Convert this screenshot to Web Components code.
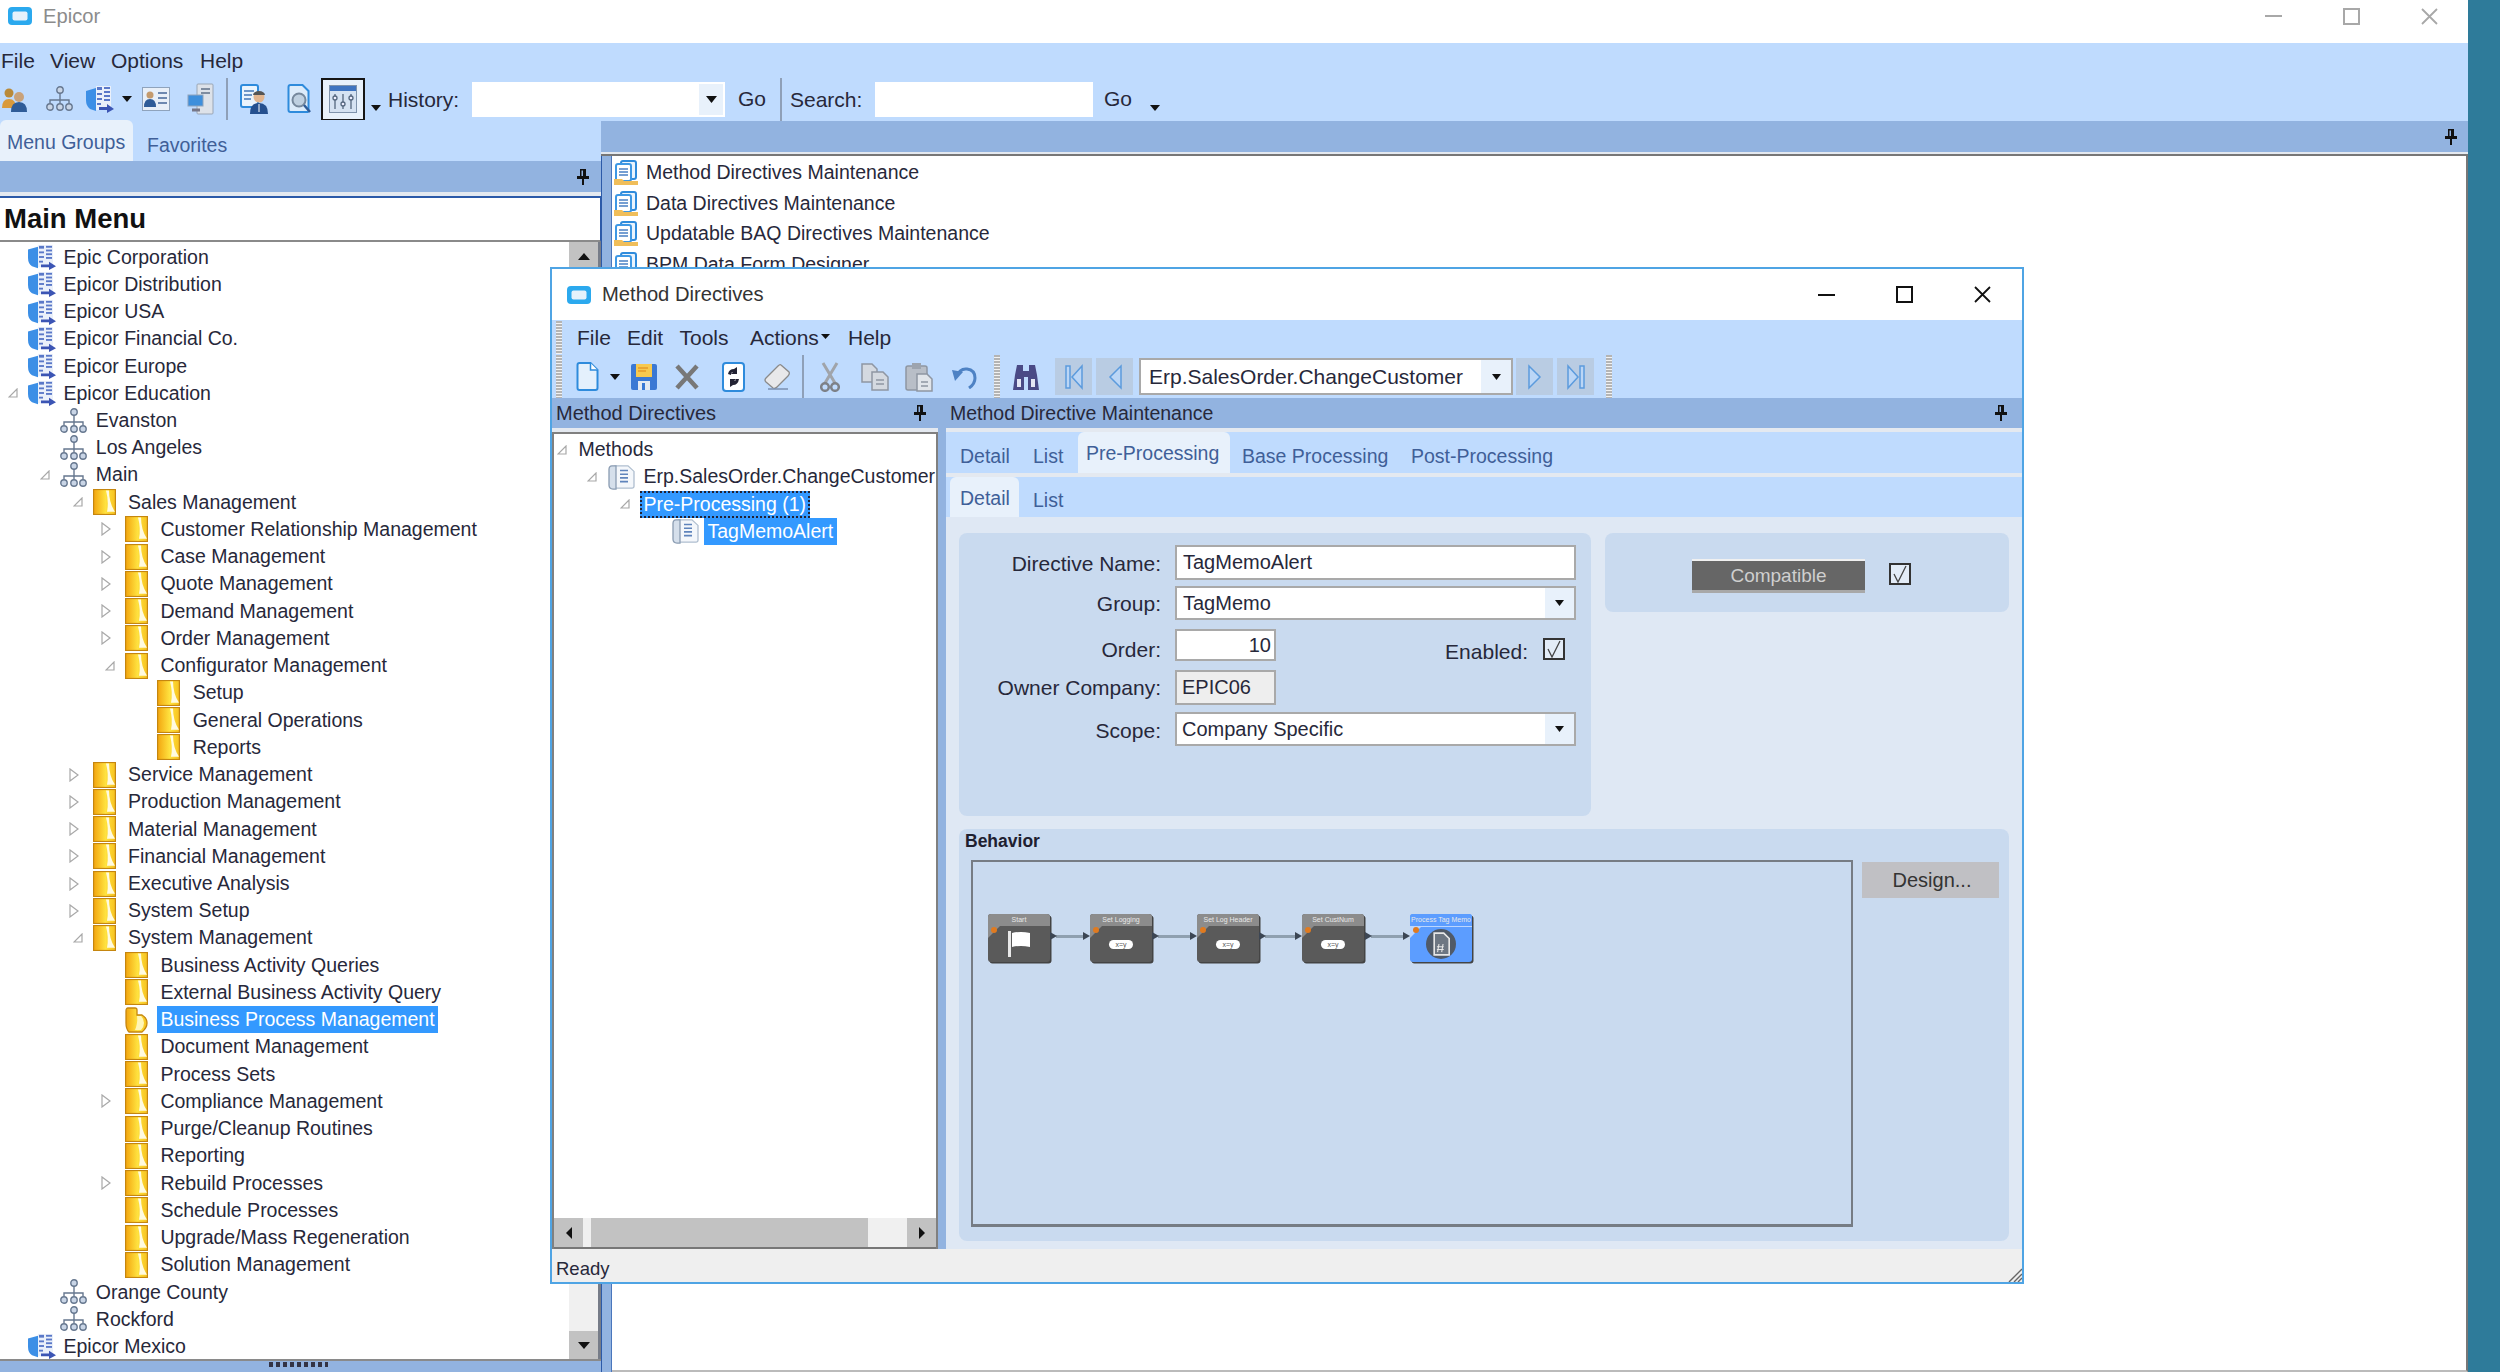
<!DOCTYPE html>
<html lang="en"><head><meta charset="utf-8"><title>Epicor</title>
<style>html,body{margin:0;padding:0;background:#2E7B9A}</style></head>
<body>
<ep-desktop>
  <ep-main-window></ep-main-window>
  <ep-dialog></ep-dialog>
</ep-desktop>
<script>
const FOLDER_GRAD='<defs><linearGradient id="g" x1="0" x2="1"><stop offset="0" stop-color="#F2A50F"/><stop offset=".55" stop-color="#FFE23F"/><stop offset="1" stop-color="#F7C21F"/></linearGradient></defs>';
const ICONS={
app:[24,18,'<rect width="24" height="18" rx="4" fill="#2BA9EE"/><rect x="4.5" y="4.5" width="15" height="9" rx="2" fill="#E6F2FB"/>'],
people:[26,26,'<circle cx="7" cy="7" r="4.5" fill="#B98A3A"/><path d="M0 22q0-9 7-9t7 9z" fill="#D99A3C"/><circle cx="17" cy="11" r="5" fill="#C9A27A"/><path d="M9 26q0-10 8-10t8 10z" fill="#2F5C98"/>'],
org:[27,26,'<g fill="#C9D5E6" stroke="#66778F" stroke-width="1.4"><circle cx="14" cy="4" r="3.2"/><circle cx="4" cy="21" r="3.2"/><circle cx="14" cy="21" r="3.2"/><circle cx="23" cy="21" r="3.2"/></g><path d="M14 7v10M4 17v-3h19v3" fill="none" stroke="#66778F" stroke-width="1.4"/>'],
building:[28,28,'<path d="M0 6l10-3v23l-6-2q-4-3-4-9z" fill="#3C8FE6"/><rect x="10" y="1" width="15" height="24" fill="#EAF0FA"/><g fill="#5A78C8"><rect x="11" y="2" width="5" height="3"/><rect x="18" y="2" width="6" height="2"/><rect x="18" y="6" width="6" height="2"/><rect x="18" y="10" width="6" height="2"/><rect x="18" y="14" width="6" height="2"/><rect x="11" y="8" width="5" height="2"/><rect x="11" y="13" width="5" height="2"/><rect x="11" y="18" width="4" height="2"/></g><path d="M13 22h8v-3l7 5-7 4v-3h-8z" fill="#3C55B4"/>'],
card:[28,24,'<rect x=".5" y=".5" width="27" height="23" fill="#E8EFF8" stroke="#8FA3BC"/><circle cx="8" cy="8" r="3.5" fill="#C49A6C"/><path d="M2 20q0-8 6-8t6 8z" fill="#2F5C98"/><path d="M16 6h9M16 11h9M16 16h9" stroke="#6D88B0" stroke-width="2"/>'],
computer:[27,32,'<rect x="10" y="1" width="16" height="30" rx="1" fill="#DDE2E9" stroke="#9AA6B5"/><path d="M14 6h9M14 10h9" stroke="#7F8DA0" stroke-width="2"/><rect x="1" y="12" width="15" height="11" fill="#3E8FDC" stroke="#8FA3BC"/><path d="M5 27h8" stroke="#778" stroke-width="3"/>'],
persondoc:[28,30,'<rect x="1" y="1" width="17" height="22" rx="2" fill="#EAF4FD" stroke="#2E8BDC" stroke-width="2"/><path d="M4 7h10M4 11h8M4 15h7" stroke="#6D96C8" stroke-width="2"/><circle cx="19" cy="13" r="5.5" fill="#E2B58F"/><path d="M19 7a6 4 0 0 1 6 4h-12a6 4 0 0 1 6-4z" fill="#555"/><path d="M10 30q0-11 9-11t9 11z" fill="#25508F"/><path d="M19 20v8" stroke="#fff"/>'],
docmag:[25,30,'<path d="M1.500 3q0-2 2-2h12l6 6v20q0 1-2 1h-16q-2 0-2-2z" fill="#DCEBFA" stroke="#2E8BDC" stroke-width="2"/><circle cx="12" cy="16" r="6.500" fill="#BFD0E0" stroke="#76889C" stroke-width="2"/><path d="M17 21l6 7" stroke="#2F5C98" stroke-width="2.500"/>'],
settings:[28,28,'<rect x=".5" y=".5" width="27" height="27" fill="#D5E2F2" stroke="#7F93AC"/><rect x="1" y="1" width="26" height="5" fill="#3F74C0"/><g stroke="#55677E" stroke-width="1.300" fill="#EEF"><path d="M6 9v15M14 9v15M22 9v15"/><circle cx="6" cy="13" r="2"/><circle cx="14" cy="19" r="2"/><circle cx="22" cy="13" r="2"/></g>'],
caret:[10,6,'<path d="M0 0h10L5 6z" fill="#111"/>'],
caretup:[12,7,'<path d="M0 7h12L6 0z" fill="#111"/>'],
caretdn:[12,7,'<path d="M0 0h12L6 7z" fill="#111"/>'],
caretl:[6,12,'<path d="M6 0v12L0 6z" fill="#111"/>'],
caretr:[6,12,'<path d="M0 0v12L6 6z" fill="#111"/>'],
pin:[12,16,'<path d="M3 0h6v7h3v3H7v6H5v-6H0V7h3zM4.500 1.500v5.500h1.500V1.500z" fill="#111"/>'],
open:[10,10,'<path d="M9 1v8H1z" fill="#fff" stroke="#A8A8A8" stroke-width="1.200"/>'],
closed:[10,14,'<path d="M1 1l8 6-8 6z" fill="#fff" stroke="#A8A8A8" stroke-width="1.200"/>'],
folder:[23,28,FOLDER_GRAD+'<rect x=".6" y=".6" width="21.800" height="26.800" fill="url(#g)" stroke="#C5860F" stroke-width="1.200"/><path d="M13 1.500h3q0 13 6 23h-8q2-11-1-23z" fill="#FFFBE0"/>'],
folderopen:[23,26,FOLDER_GRAD+'<path d="M3 1h7q2 0 2 2v5h5q5 3 5 8t-5 9H4q-3-3-3-9V4q0-3 2-3z" fill="url(#g)" stroke="#C5860F" stroke-width="1.300"/><path d="M12 9h4q3 3 3 7t-3 7h-6q3-7 2-14z" fill="#FFF6B8"/>'],
menudoc:[24,25,'<rect x="7" y="1" width="15" height="18" rx="2" fill="#EAF4FD" stroke="#2E8BDC" stroke-width="2"/><rect x="2" y="4" width="15" height="17" rx="2" fill="#fff" stroke="#3E98E4" stroke-width="2"/><path d="M5 9h9M5 12h9M5 15h9" stroke="#4A80C4" stroke-width="1.600"/><path d="M0 19h8l2 2h14v4H0z" fill="#F0BE5A"/>'],
methoddoc:[27,28,'<path d="M7 2h13l6 6v16q0 2-2 2H7z" fill="#F4F7FB" stroke="#AFBECF" stroke-width="1.300"/><path d="M1 6q0-4 3-4h4v25H5q-4 0-4-4z" fill="#D5DFEB" stroke="#8A9CB2" stroke-width="1.300"/><path d="M12 7h8M12 11h8M12 15h8M12 19h8" stroke="#5F84BC" stroke-width="1.800"/>'],
newdoc:[23,29,'<path d="M1.500 3q0-2 2-2h11l7 7v18q0 2-2 2h-16q-2 0-2-2z" fill="#E4F0FC" stroke="#2E8BDC" stroke-width="2"/><path d="M14.500 1v7h7" fill="#fff" stroke="#2E8BDC" stroke-width="1.500"/>'],
save:[28,28,'<rect x="1" y="1" width="26" height="26" rx="2" fill="#3A78D4"/><rect x="6" y="1" width="16" height="13" fill="#F7C94F"/><path d="M8 5h10M8 8h8" stroke="#E69A2A" stroke-width="1.500"/><rect x="8" y="18" width="12" height="9" fill="#E4E9F2"/><rect x="12" y="20" width="3" height="7" fill="#3A78D4"/>'],
xmark:[26,28,'<path d="M3 3l20 22M23 3L3 25" stroke="#787878" stroke-width="4.500"/>'],
refresh:[23,30,'<rect x="1" y="1" width="21" height="28" rx="3" fill="#fff" stroke="#2E8BDC" stroke-width="2"/><path d="M6 12q1-5 6-5l3-2v7h-6l2-2q-2 0-2 3zM17 17q-1 6-6 6l-3 2v-8h6l-2 2q2 0 2-2z" fill="#223"/>'],
eraser:[26,26,'<path d="M17 1l8 7q1 2-1 4L13 23q-2 2-4 1l-7-6q-2-2 0-4L14 2q2-2 3-1z" fill="#E8E8EA" stroke="#8A8A8A" stroke-width="1.300"/><path d="M4 25h20" stroke="#7A8FB0" stroke-width="1.500"/>'],
scissors:[20,30,'<path d="M3 1l12 20M17 1L5 21" stroke="#A0A4AA" stroke-width="3"/><circle cx="5" cy="25" r="3.800" fill="none" stroke="#7D8188" stroke-width="2.500"/><circle cx="15" cy="25" r="3.800" fill="none" stroke="#7D8188" stroke-width="2.500"/>'],
copy:[28,28,'<g fill="#D4D9E0" stroke="#8E96A2" stroke-width="1.500"><path d="M1 1h10l5 5v13H1z"/><path d="M11 9h11l5 5v13H11z"/></g><path d="M15 17h8M15 21h8" stroke="#8E96A2" stroke-width="1.500"/>'],
paste:[28,30,'<rect x="1" y="4" width="21" height="24" rx="2" fill="#B8BEC7" stroke="#8E96A2" stroke-width="1.500"/><rect x="7" y="1" width="9" height="6" fill="#9DA4AE"/><path d="M12 12h10l5 5v12H12z" fill="#E1E5EA" stroke="#8E96A2" stroke-width="1.500"/><path d="M16 20h7M16 24h7" stroke="#8E96A2" stroke-width="1.500"/>'],
undo:[25,24,'<path d="M4 12q4-9 11-8 8 1 8 9 0 6-6 10" fill="none" stroke="#4E82C4" stroke-width="3"/><path d="M0 5l11 2-8 9z" fill="#4E82C4"/>'],
binoc:[28,28,'<path d="M5 2h6v6h6V2h6l2 10 2 15H16V14h-4v13H1l2-15z" fill="#4A4A86"/><path d="M5 16h4v8H5zM19 16h4v8h-4z" fill="#E4E6F4"/>'],
first:[20,26,'<path d="M2 2h4v22H2zM18 2v22L8 13z" fill="#BBD6F6" stroke="#5C9BDD" stroke-width="1.500"/>'],
prev:[14,26,'<path d="M13 2v22L2 13z" fill="#BBD6F6" stroke="#5C9BDD" stroke-width="1.500"/>'],
next:[14,26,'<path d="M1 2v22L12 13z" fill="#BBD6F6" stroke="#5C9BDD" stroke-width="1.500"/>'],
last:[20,26,'<path d="M18 2h-4v22h4zM2 2v22L12 13z" fill="#BBD6F6" stroke="#5C9BDD" stroke-width="1.500"/>'],
check:[18,18,'<path d="M3 9l4 8 8-16" fill="none" stroke="#444" stroke-width="1.300"/>'],
min:[17,2,'<rect width="17" height="2" fill="currentColor"/>'],
max:[17,17,'<rect x="1" y="1" width="15" height="15" fill="none" stroke="currentColor" stroke-width="2"/>'],
close:[17,17,'<path d="M1 1l15 15M16 1L1 16" stroke="currentColor" stroke-width="1.800"/>'],
flag:[22,26,'<rect width="3" height="26" fill="#E8E8E8"/><path d="M4 2q9-2 18 0v14q-9-2-18 0z" fill="#fff"/>'],
resize:[14,14,'<path d="M14 1L1 14M14 6L6 14M14 10l-4 4" stroke="#666" stroke-width="1.400"/>'],
memo:[22,22,'<circle cx="11" cy="11" r="11" fill="#505A68"/><path d="M6 3h7l4 4v12H6z" fill="#6D7682" stroke="#E6E6E6" stroke-width="1.200"/><path d="M9.500 11l-1 6M12.500 11l-1 6M8 13h5M8 15h5" stroke="#E6E6E6" stroke-width=".8"/>']
};
const FONT='"Liberation Sans",Arial,sans-serif';
function def(name,render){
  customElements.define(name,class extends HTMLElement{
    connectedCallback(){ if(this.shadowRoot)return; const r=this.attachShadow({mode:'open'}); r.innerHTML=render(this); }
  });
}
const a=(el,n,d)=>el.hasAttribute(n)?el.getAttribute(n):d;

def('ep-icon',el=>{
  const ic=ICONS[a(el,'name','app')],w=a(el,'w',ic[0]),h=a(el,'h',ic[1]);
  return `<style>:host{display:inline-flex;flex:none;line-height:0}svg{display:block}</style><svg width="${w}" height="${h}" viewBox="0 0 ${ic[0]} ${ic[1]}" preserveAspectRatio="none" aria-hidden="true">${ic[2]}</svg>`;
});

def('ep-desktop',()=>`<style>:host{display:block;position:relative;width:2500px;height:1372px;overflow:hidden;background:#2E7B9A;font:19.5px ${FONT};color:#27283A}</style><slot></slot>`);

def('ep-titlebar',el=>{
  const dark=el.hasAttribute('dark');
  return `<style>:host{display:flex;align-items:center;flex:none;box-sizing:border-box;height:${a(el,'h',43)}px;background:#fff;color:${dark?'#333':'#8C8C8C'};font-size:20.2px;padding:0 ${a(el,'pr',0)}px ${a(el,'pb',0)}px ${a(el,'pad',8)}px}
  .t{margin-left:11px;flex:1}
  .c{display:flex;color:${dark?'#111':'#A8A8A8'}}
  .b{display:flex;align-items:center;justify-content:center;width:78px}</style>
  <ep-icon name="app"></ep-icon><span class="t"><slot></slot></span>
  <div class="c"><div class="b"><ep-icon name="min"></ep-icon></div><div class="b"><ep-icon name="max"></ep-icon></div><div class="b"><ep-icon name="close"></ep-icon></div></div>`;
});

def('ep-cell',el=>`<style>:host{display:flex;align-items:center;flex:none;box-sizing:border-box;width:${a(el,'w',40)}px;padding-left:${a(el,'p',0)}px;white-space:nowrap}</style><slot></slot>`);

def('ep-bar',el=>`<style>:host{display:flex;align-items:center;flex:none;box-sizing:border-box;height:${a(el,'h',32)}px;padding-top:${a(el,'pt',0)}px;background:#BFDBFE;color:#27283A;font-size:21px}</style><slot></slot>`);

def('ep-sep',()=>`<style>:host{display:block;flex:none;width:2px;height:43px;background:#8FA0B8}</style>`);
def('ep-grip',()=>`<style>:host{display:block;flex:none;width:6px;height:44px;background:repeating-linear-gradient(#B4B4B4 0 2px,#F2F2F2 2px 3px)}</style>`);

def('ep-combo',el=>{
  const dd=el.hasAttribute('dd');
  return `<style>:host{display:flex;flex:none;box-sizing:border-box;align-items:center;width:${a(el,'w',200)}px;height:${a(el,'h',35)}px;background:${a(el,'bg','#fff')};border:${a(el,'b','2px solid #A9A9A9')};${el.hasAttribute('right')?'justify-content:flex-end;':''}color:#27283A}
  .v{flex:${el.hasAttribute('right')?'none':'1'};padding:0 ${a(el,'tp',6)}px;white-space:nowrap;overflow:hidden}
  .d{display:${dd?'flex':'none'};align-items:center;justify-content:center;width:${a(el,'dw',29)}px;align-self:stretch;background:#E8F1FB}</style>
  <span class="v"><slot></slot></span><div class="d"><ep-icon name="caret" w="${a(el,'cw',9)}" h="${a(el,'ch',6)}"></ep-icon></div>`;
});

def('ep-band',el=>`<style>:host{display:flex;align-items:center;justify-content:space-between;flex:none;height:${a(el,'h',31)}px;background:#92B3E0;padding:0 ${a(el,'pr',12)}px 0 4px;color:#27283A;font-size:${a(el,'fs',20)}px}</style><span><slot></slot></span><ep-icon name="pin"></ep-icon>`);

def('ep-tree-row',el=>{
  const ex=a(el,'exp',''),ic=a(el,'icon',''),sel=a(el,'sel',''),ew=a(el,'ew',23);
  const exMark=ex==='open'?'<ep-icon name="open" style="margin-left:3px"></ep-icon>':ex==='closed'?'<ep-icon name="closed" style="margin-left:-1px"></ep-icon>':'';
  const w={building:28,org:27,folder:23,folderopen:23,methoddoc:27}[ic]||24;
  return `<style>:host{display:flex;align-items:center;height:27.24px;padding-left:${a(el,'pad',0)}px;white-space:nowrap}
  .e{display:flex;align-items:center;flex:none;width:${ew}px}.i{display:flex;flex:none;width:${a(el,'iw',32)}px}
  .l{display:flex;align-items:center;height:27px;padding:0 3.5px;box-sizing:border-box;${sel?`background:#3399FF;color:#fff;`:''}${sel==='focus'?'outline:2px dotted #223;outline-offset:-2px;':''}}</style>
  <div class="e">${exMark}</div>${ic?`<div class="i"><ep-icon name="${ic}" w="${w}" h="26"></ep-icon></div>`:''}<span class="l"><slot></slot></span>`;
});

const MAIN_ROWS=[[0,'Epic Corporation','building'],[0,'Epicor Distribution','building'],[0,'Epicor USA','building'],[0,'Epicor Financial Co.','building'],[0,'Epicor Europe','building'],[0,'Epicor Education','building','open'],
[1,'Evanston','org'],[1,'Los Angeles','org'],[1,'Main','org','open'],[2,'Sales Management','folder','open'],
[3,'Customer Relationship Management','folder','closed'],[3,'Case Management','folder','closed'],[3,'Quote Management','folder','closed'],[3,'Demand Management','folder','closed'],[3,'Order Management','folder','closed'],[3,'Configurator Management','folder','open'],
[4,'Setup','folder'],[4,'General Operations','folder'],[4,'Reports','folder'],
[2,'Service Management','folder','closed'],[2,'Production Management','folder','closed'],[2,'Material Management','folder','closed'],[2,'Financial Management','folder','closed'],[2,'Executive Analysis','folder','closed'],[2,'System Setup','folder','closed'],[2,'System Management','folder','open'],
[3,'Business Activity Queries','folder'],[3,'External Business Activity Query','folder'],[3,'Business Process Management','folderopen','','1'],[3,'Document Management','folder'],[3,'Process Sets','folder'],[3,'Compliance Management','folder','closed'],[3,'Purge/Cleanup Routines','folder'],[3,'Reporting','folder'],[3,'Rebuild Processes','folder','closed'],[3,'Schedule Processes','folder'],[3,'Upgrade/Mass Regeneration','folder'],[3,'Solution Management','folder'],
[1,'Orange County','org'],[1,'Rockford','org'],[0,'Epicor Mexico','building']];

def('ep-vscroll',()=>`<style>:host{display:flex;flex-direction:column;justify-content:space-between;flex:none;width:29px;background:#F0F0F0}
.b{display:flex;align-items:center;justify-content:center;height:28px;background:#C2C2C2}</style>
<div class="b"><ep-icon name="caretup"></ep-icon></div><div class="b"><ep-icon name="caretdn"></ep-icon></div>`);

def('ep-main-tree',()=>`<style>:host{display:flex;flex:1;min-height:0;background:#fff;overflow:hidden}
.t{flex:1;overflow:hidden;padding-top:1.500px}</style>
<div class="t">${MAIN_ROWS.map(r=>`<ep-tree-row pad="${(5+r[0]*32.3).toFixed(1)}" icon="${r[2]}" ${r[3]?`exp="${r[3]}"`:''} ${r[4]?'sel="1"':''}>${r[1]}</ep-tree-row>`).join('')}</div><ep-vscroll></ep-vscroll>`);

def('ep-tab',el=>{
  const on=el.hasAttribute('active');
  return `<style>:host{display:flex;align-items:center;flex:none;box-sizing:border-box;width:${a(el,'w',60)}px;padding:${a(el,'pt',on?2:7)}px 0 0 ${a(el,'p',8)}px;white-space:nowrap;color:#3F5F98;${on?'background:#E8F1FB;border-radius:6px 6px 0 0;':''}}</style><slot></slot>`;
});

def('ep-left-pane',()=>`<style>:host{display:flex;flex-direction:column;flex:none;width:601px;height:100%;box-sizing:border-box;background:#BFDBFE}
.tabs{display:flex;flex:none;height:41px}
.light{flex:none;height:4px;background:#E4E9F0}
.mm{flex:none;height:42px;display:flex;align-items:center;padding-left:4px;background:#fff;border-top:2px solid #2C5AA8;border-right:1px solid #2C5AA8;border-bottom:2px solid #8A8A8A;font-size:27.5px;font-weight:bold;color:#111;box-sizing:content-box}
.body{flex:1;min-height:0;display:flex;border-right:3px solid #767C88;background:#fff}
.foot{flex:none;height:2px;background:#8A8A8A}
.grip{flex:none;height:11px;background:#92B3E0;display:flex;justify-content:center;padding-top:1px;box-sizing:border-box}
.grip i{display:block;width:59px;height:5px;margin-left:-5px;background:repeating-linear-gradient(90deg,#334 0 4px,transparent 4px 7px)}</style>
<div class="tabs"><ep-tab active w="133" p="7" pt="3">Menu Groups</ep-tab><ep-tab w="140" p="14" pt="9">Favorites</ep-tab></div>
<ep-band pr="12"> </ep-band><div class="light"></div>
<div class="mm">Main Menu</div>
<div class="body"><ep-main-tree></ep-main-tree></div><div class="foot"></div><div class="grip"><i></i></div>`);

def('ep-right-pane',()=>`<style>:host{display:flex;flex-direction:column;flex:1;min-width:0;height:100%;padding-top:1px;box-sizing:border-box}
.light{flex:none;height:2px;background:#E4E9F0}
.line{flex:none;height:2px;background:#777}
.body{flex:1;min-height:0;display:flex;background:#92B3E0}
.l1{width:1px;background:#2C5AA8;flex:none}.gap{width:9px;flex:none}.l2{width:1px;background:#4A76BC;flex:none}
.list{flex:1;background:#fff;border-right:2px solid #777;border-bottom:2px solid #BBB;padding:1.500px 0 0 2px;box-sizing:border-box}
.it{display:flex;align-items:center;gap:8px;height:30.6px;white-space:nowrap}</style>
<ep-band pr="11"> </ep-band><div class="light"></div><div class="line"></div>
<div class="body"><div class="l1"></div><div class="gap"></div><div class="l2"></div>
<div class="list">
<div class="it"><ep-icon name="menudoc"></ep-icon><span>Method Directives Maintenance</span></div>
<div class="it"><ep-icon name="menudoc"></ep-icon><span>Data Directives Maintenance</span></div>
<div class="it"><ep-icon name="menudoc"></ep-icon><span>Updatable BAQ Directives Maintenance</span></div>
<div class="it"><ep-icon name="menudoc"></ep-icon><span>BPM Data Form Designer</span></div>
</div></div>`);

def('ep-main-window',()=>`<style>:host{display:flex;flex-direction:column;width:2468px;height:1372px;background:#BFDBFE}
.body{flex:1;min-height:0;display:flex}</style>
<ep-titlebar h="43" pb="11">Epicor</ep-titlebar>
<ep-bar h="32" pt="4"><ep-cell w="50" p="1">File</ep-cell><ep-cell w="61">View</ep-cell><ep-cell w="89">Options</ep-cell><ep-cell w="60">Help</ep-cell></ep-bar>
<ep-bar h="45" pt="3">
<ep-cell w="46" p="2"><ep-icon name="people"></ep-icon></ep-cell><ep-cell w="40"><ep-icon name="org"></ep-icon></ep-cell><ep-cell w="36"><ep-icon name="building"></ep-icon></ep-cell><ep-cell w="20"><ep-icon name="caret"></ep-icon></ep-cell><ep-cell w="45"><ep-icon name="card"></ep-icon></ep-cell><ep-cell w="39"><ep-icon name="computer"></ep-icon></ep-cell><ep-cell w="14"><ep-sep></ep-sep></ep-cell><ep-cell w="47"><ep-icon name="persondoc"></ep-icon></ep-cell><ep-cell w="34"><ep-icon name="docmag"></ep-icon></ep-cell>
<ep-cell w="44"><ep-toolsel><ep-icon name="settings"></ep-icon></ep-toolsel></ep-cell>
<ep-cell w="23" p="6"><ep-icon name="caret" style="margin-top:18px"></ep-icon></ep-cell>
<ep-cell w="84" style="padding-top:2px">History:</ep-cell>
<ep-combo w="253" h="35" b="2px solid #fff" dd dw="24" cw="11" ch="7"></ep-combo>
<ep-cell w="55" p="13">Go</ep-cell><ep-cell w="10"><ep-sep></ep-sep></ep-cell><ep-cell w="85" style="padding-top:2px">Search:</ep-cell>
<ep-combo w="218" h="35" b="2px solid #fff"></ep-combo>
<ep-cell w="57" p="11">Go</ep-cell><ep-cell w="12"><ep-icon name="caret" style="margin-top:18px"></ep-icon></ep-cell>
</ep-bar>
<div class="body"><ep-left-pane></ep-left-pane><ep-right-pane></ep-right-pane></div>`);

def('ep-toolsel',()=>`<style>:host{display:flex;align-items:center;justify-content:center;box-sizing:border-box;width:44px;height:43px;background:#E8F1FB;border:2px solid #151515}</style><slot></slot>`);

def('ep-navbtn',el=>`<style>:host{display:flex;align-items:center;justify-content:center;flex:none;width:37px;height:37px;background:#B9CCE3}</style><ep-icon name="${a(el,'name','prev')}"></ep-icon>`);

def('ep-method-tree',()=>`<style>:host{display:flex;flex-direction:column;flex:1;min-height:0;background:#fff;border:2px solid #808080;border-bottom:0;overflow:hidden;box-sizing:border-box}
.t{flex:1;padding-top:2px;overflow:hidden}
.h{display:flex;flex:none;height:29px;background:#F0F0F0;border-bottom:2px solid #777;box-sizing:content-box}
.b{display:flex;align-items:center;justify-content:center;flex:none;width:29px;background:#C2C2C2}
.tr{flex:none;background:#F0F0F0}.th{flex:none;width:277px;background:#C2C2C2}</style>
<div class="t">
<ep-tree-row pad="0" ew="21" exp="open">Methods</ep-tree-row>
<ep-tree-row pad="30" ew="24" exp="open" icon="methoddoc">Erp.SalesOrder.ChangeCustomer</ep-tree-row>
<ep-tree-row pad="63" ew="23" exp="open" sel="focus">Pre-Processing (1)</ep-tree-row>
<ep-tree-row pad="95" ew="23" icon="methoddoc" sel="1">TagMemoAlert</ep-tree-row>
</div>
<div class="h"><div class="b"><ep-icon name="caretl" w="6" h="12"></ep-icon></div><div class="tr" style="width:8px"></div><div class="th"></div><div class="tr" style="width:39px"></div><div class="b"><ep-icon name="caretr" w="6" h="12"></ep-icon></div></div>`);

def('ep-field',el=>`<style>:host{display:flex;align-items:center;margin-top:${a(el,'mt',0)}px;height:${a(el,'h',35)}px}
.lb{width:202px;text-align:right;margin-right:14px;flex:none;white-space:nowrap;font-size:21px;padding-top:${a(el,'lp',2)}px}.r{display:flex;align-items:center;flex:1;font-size:20px}</style>
<span class="lb">${a(el,'label','')}</span><div class="r"><slot></slot></div>`);

def('ep-check',()=>`<style>:host{display:flex;align-items:center;justify-content:center;flex:none;box-sizing:border-box;width:22px;height:22px;background:#E3ECF7;border:2px solid #333}</style><ep-icon name="check"></ep-icon>`);

def('ep-panel',el=>`<style>:host{display:block;box-sizing:border-box;background:#C9DAEF;border-radius:8px;padding:${a(el,'p','0')}}</style><slot></slot>`);

def('ep-node',el=>{
  const blue=el.hasAttribute('blue');
  return `<style>:host{position:absolute;left:${a(el,'x',0)}px;top:52px;width:62px;height:48px;border-radius:3px;background:${blue?'#5C9DFF':'#5A5A5A'};box-shadow:1.500px 1.500px 0 #444;overflow:hidden;display:block}
  .h{height:12px;background:${blue?'#5C9DFF':'#8C8C8C'};${blue?'border-bottom:1px solid #BBD6FF;':''}color:#E8E8E8;font-size:7px;line-height:12px;text-align:center;white-space:nowrap;overflow:hidden}
  .tri{position:absolute;left:0;top:12px;width:0;height:0;border-top:12px solid ${blue?'#BBD6FF':'#8C8C8C'};border-right:12px solid transparent}
  .dot{position:absolute;left:3px;top:13px;width:6px;height:6px;border-radius:50%;background:#E07A1F}
  .c{position:absolute;left:0;right:0;top:12px;bottom:0;display:flex;align-items:center;justify-content:center}
  .p{background:#fff;border-radius:5px;color:#555;font-size:7px;line-height:9px;padding:0 6px}</style>
  <div class="h"><slot></slot></div><div class="tri"></div><div class="dot"></div>
  <div class="c">${a(el,'kind','')==='flag'?'<ep-icon name="flag"></ep-icon>':a(el,'kind','')==='memo'?'<ep-icon name="memo" w="30" h="30"></ep-icon>':'<span class="p">x=y</span>'}</div>`;
});

def('ep-link',el=>`<style>:host{position:absolute;left:${a(el,'x',0)}px;top:70px;width:${a(el,'w',40)}px;height:8px;display:block}
.l{position:absolute;left:6px;right:6px;top:2.500px;height:3px;background:#8FA0B0}
.a{position:absolute;top:0;border-left:7px solid #3C4654;border-top:4px solid transparent;border-bottom:4px solid transparent}</style>
<div class="l"></div><div class="a" style="left:0"></div><div class="a" style="right:0"></div>`);

def('ep-canvas',()=>`<style>:host{display:block;position:relative;box-sizing:border-box;flex:none;width:882px;height:367px;border:2px solid #767C84;border-bottom-width:3px}</style>
<ep-node x="15" kind="flag">Start</ep-node><ep-link x="77" w="40"></ep-link>
<ep-node x="117">Set Logging</ep-node><ep-link x="179" w="45"></ep-link>
<ep-node x="224">Set Log Header</ep-node><ep-link x="286" w="43"></ep-link>
<ep-node x="329">Set CustNum</ep-node><ep-link x="392" w="45"></ep-link>
<ep-node x="437" blue kind="memo">Process Tag Memo</ep-node>`);

def('ep-form',()=>`<style>:host{display:grid;grid-template-columns:632px 404px;grid-template-rows:283px 412px;column-gap:14px;row-gap:13px;align-content:start;flex:1;min-height:0;box-sizing:border-box;padding:16px 0 0 13px;background:#DFE8F4}
.btn{display:flex;align-items:center;justify-content:center;box-sizing:border-box;width:173px;height:34px;background:#666;color:#CFCFCF;font-size:19px;border-top:2px solid #F0F0F0;border-bottom:3px solid #A8A8A8}
.comp{display:flex;align-items:center;gap:24px;padding:26px 0 0 87px}
.comp ep-check{margin-top:-4px}
.beh{display:flex;flex-wrap:wrap;align-content:flex-start;padding:0 0 0 6px}
.bt{width:100%;height:25px;margin-bottom:6px;display:flex;align-items:center;font-weight:bold;font-size:17.5px;color:#1E2030}
.cv{display:flex;gap:9px;margin-left:6px}
.des{display:flex;align-items:center;justify-content:center;box-sizing:border-box;width:137px;height:36px;margin-top:2px;padding-left:3px;background:#C0C0C4;color:#333;font-size:20px}
.en{margin-left:auto;margin-right:26px;display:flex;align-items:center;gap:15px;font-size:21px}
.en span{padding-top:13px}.en ep-check{margin-top:7px}</style>
<ep-panel p="12px 0 0 0">
<ep-field label="Directive Name:" h="35"><ep-combo w="401" h="35">TagMemoAlert</ep-combo></ep-field>
<ep-field label="Group:" h="34" mt="6"><ep-combo w="401" h="34" dd>TagMemo</ep-combo></ep-field>
<ep-field label="Order:" h="32" mt="9" lp="10"><ep-combo w="101" h="32" right tp="3">10</ep-combo><div class="en"><span>Enabled:</span><ep-check></ep-check></div></ep-field>
<ep-field label="Owner Company:" h="35" mt="9" lp="0"><ep-combo w="101" h="35" bg="#EEEEEE" tp="5">EPIC06</ep-combo></ep-field>
<ep-field label="Scope:" h="34" mt="7" lp="4"><ep-combo w="401" h="34" dd tp="5">Company Specific</ep-combo></ep-field>
</ep-panel>
<ep-panel style="align-self:start;height:79px"><div class="comp"><div class="btn">Compatible</div><ep-check></ep-check></div></ep-panel>
<ep-panel style="grid-column:1 / 3"><div class="beh"><div class="bt">Behavior</div><div class="cv"><ep-canvas></ep-canvas><div class="des">Design...</div></div></div></ep-panel>`);

def('ep-dialog',()=>`<style>:host{position:absolute;left:550px;top:267px;width:1474px;height:1017px;box-sizing:border-box;border:2px solid #4FA4E4;display:flex;flex-direction:column;background:#fff}
.body{flex:1;min-height:0;display:flex;background:#92B3E0}
.left{display:flex;flex-direction:column;width:386px;flex:none}
.right{display:flex;flex-direction:column;flex:1;min-width:0;margin-left:8px}
.light{flex:none;height:4px;background:#E4E9F0}
.tabs{display:flex;flex:none;height:41px;background:#BFDBFE}
.status{display:flex;flex:none;justify-content:space-between;height:33px;background:#EFEFEF;padding-left:4px;box-sizing:border-box}
.status span{align-self:center;padding-top:7px;font-size:18.5px}
.status ep-icon{align-self:flex-end}</style>
<ep-titlebar h="51" dark pad="15" pr="1">Method Directives</ep-titlebar>
<ep-bar h="34" pt="2"><ep-cell w="25"><ep-grip style="height:34px;margin-left:4px"></ep-grip></ep-cell><ep-cell w="50">File</ep-cell><ep-cell w="52.500">Edit</ep-cell><ep-cell w="70.500">Tools</ep-cell><ep-cell w="98">Actions<ep-icon name="caret" w="9" h="5" style="margin:-3px 0 0 2px"></ep-icon></ep-cell><ep-cell w="60">Help</ep-cell></ep-bar>
<ep-bar h="44" pt="1">
<ep-cell w="24"><ep-grip style="margin-left:4px"></ep-grip></ep-cell><ep-cell w="34"><ep-icon name="newdoc"></ep-icon></ep-cell><ep-cell w="20"><ep-icon name="caret"></ep-icon></ep-cell><ep-cell w="44"><ep-icon name="save"></ep-icon></ep-cell><ep-cell w="48"><ep-icon name="xmark"></ep-icon></ep-cell><ep-cell w="42"><ep-icon name="refresh"></ep-icon></ep-cell><ep-cell w="38"><ep-icon name="eraser"></ep-icon></ep-cell><ep-cell w="18"><ep-sep></ep-sep></ep-cell><ep-cell w="41"><ep-icon name="scissors"></ep-icon></ep-cell><ep-cell w="44"><ep-icon name="copy"></ep-icon></ep-cell><ep-cell w="47"><ep-icon name="paste"></ep-icon></ep-cell><ep-cell w="42"><ep-icon name="undo"></ep-icon></ep-cell><ep-cell w="18"><ep-grip></ep-grip></ep-cell><ep-cell w="43"><ep-icon name="binoc"></ep-icon></ep-cell>
<ep-cell w="41"><ep-navbtn name="first"></ep-navbtn></ep-cell><ep-cell w="43"><ep-navbtn name="prev"></ep-navbtn></ep-cell>
<ep-combo w="374" h="37" dd dw="30" tp="8">Erp.SalesOrder.ChangeCustomer</ep-combo>
<ep-cell w="44" p="3"><ep-navbtn name="next"></ep-navbtn></ep-cell><ep-cell w="49"><ep-navbtn name="last"></ep-navbtn></ep-cell><ep-cell w="8"><ep-grip></ep-grip></ep-cell></ep-bar>
<div class="body">
<div class="left"><ep-band h="30" pr="12">Method Directives</ep-band><div class="light"></div><ep-method-tree></ep-method-tree></div>
<div class="right"><ep-band h="30" pr="15" fs="19.5">Method Directive Maintenance</ep-band><div class="light"></div>
<div class="tabs"><ep-tab w="73" p="14">Detail</ep-tab><ep-tab w="59" p="14">List</ep-tab><ep-tab active w="152" p="8">Pre-Processing</ep-tab><ep-tab w="169" p="12">Base Processing</ep-tab><ep-tab w="180" p="12">Post-Processing</ep-tab></div><div class="light"></div>
<div class="tabs" style="height:40px"><ep-tab active w="69" p="10" style="margin-left:4px">Detail</ep-tab><ep-tab w="60" p="14">List</ep-tab></div>
<ep-form></ep-form></div>
</div>
<div class="status"><span>Ready</span><ep-icon name="resize"></ep-icon></div>`);
</script>
</body></html>
